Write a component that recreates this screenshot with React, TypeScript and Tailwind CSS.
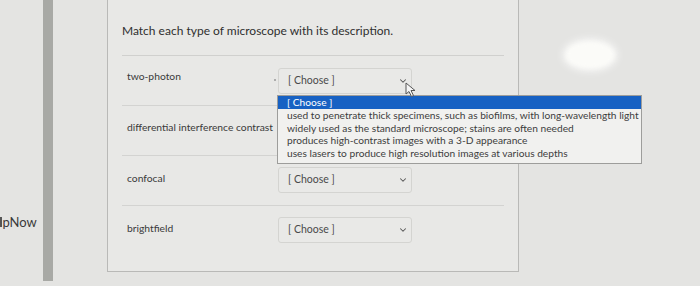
import { ChevronDown } from "lucide-react";

const rows = [
  { label: "two-photon", pt: "pt-[13px]", selPt: "pt-[12px]", select: true },
  { label: "differential interference contrast", pt: "pt-[14px]", selPt: "", select: false },
  { label: "confocal", pt: "pt-[15px]", selPt: "pt-[11px]", select: true },
  { label: "brightfield", pt: "pt-[15px]", selPt: "pt-[11px]", select: true },
];

const options = [
  "[ Choose ]",
  "used to penetrate thick specimens, such as biofilms, with long-wavelength light",
  "widely used as the standard microscope; stains are often needed",
  "produces high-contrast images with a 3-D appearance",
  "uses lasers to produce high resolution images at various depths",
];

const Select = () => (
  <div className="w-[134px] h-[26px] border border-[#d4d4d1] rounded-[3px] bg-[#e9e9e7] flex items-center justify-between pl-[9px] pr-[3px] text-[10.5px] text-[#4a4a4a]">
    <span>[ Choose ]</span>
    <ChevronDown size={10} strokeWidth={2.5} className="text-[#555]" />
  </div>
);

const App = () => {
  return (
    <div
      className="w-[700px] h-[286px] bg-[#e4e4e2] flex overflow-hidden text-[#3a3a3a]"
      style={{ fontFamily: "Lato, 'Open Sans', sans-serif" }}
    >
      {/* left edge */}
      <div className="w-[43px] shrink-0 flex items-start pt-[213px]">
        <div className="w-[1.5px] h-[10px] mt-[4px] bg-[#555]" />
        <span className="text-[13px] ml-[1px] whitespace-nowrap">pNow</span>
      </div>
      <div className="w-[10px] h-[281px] shrink-0 bg-[#a8a9a5]" />

      {/* question card */}
      <div className="ml-[54px] w-[412px] h-[272px] shrink-0 border-x border-b border-[#b9b9b7] bg-[#e8e8e6] px-[14px] relative">
        <div className="h-[55px] pt-[22px] text-[12px] text-[#2f2f2f]">
          Match each type of microscope with its description.
        </div>
        <div className="border-t border-[#d0d0ce]">
          {rows.map((r, i) => (
            <div
              key={r.label}
              className={`flex h-[50px] pl-[5px] ${i < 3 ? "border-b border-[#d3d3d1]" : ""}`}
            >
              <div className={`w-[151px] ${r.pt} text-[10.3px] leading-[14px] whitespace-nowrap`}>
                {r.label}
              </div>
              {r.select && (
                <div className={r.selPt}>
                  <Select />
                </div>
              )}
            </div>
          ))}
        </div>

        {/* small mark left of first select */}
        <div className="absolute left-[166px] top-[79px] w-[2px] h-[2px] rounded-full bg-[#999]" />

        {/* open dropdown list */}
        <div className="absolute left-[169px] top-[95px] w-[365px] border border-[#9d9d9b] bg-[#f1f1ef] text-[10.2px] leading-[12.8px] text-[#3d3d3d] z-10 pb-[3px]">
          {options.map((o, i) => (
            <div
              key={o}
              className={`pl-[9px] whitespace-nowrap ${i === 0 ? "bg-[#1761c3] text-white" : ""}`}
            >
              {o}
            </div>
          ))}
        </div>

        {/* mouse pointer */}
        <svg
          className="absolute left-[297px] top-[82px] z-20"
          width="12"
          height="16"
          viewBox="0 0 12 16"
        >
          <path d="M1 1 L1 12 L4 9.5 L6.5 14.5 L8.5 13.5 L6 8.5 L10 8.5 Z" fill="#f5f5f5" stroke="#555" strokeWidth="1" />
        </svg>
      </div>

      {/* glare */}
      <div className="flex-1 pl-[46px] pt-[41px]">
        <div className="w-[50px] h-[28px] rounded-[50%] bg-[#fbfbf8] blur-[2px] shadow-[0_0_6px_3px_rgba(255,255,255,0.6)]" />
      </div>
    </div>
  );
};

export default App;
